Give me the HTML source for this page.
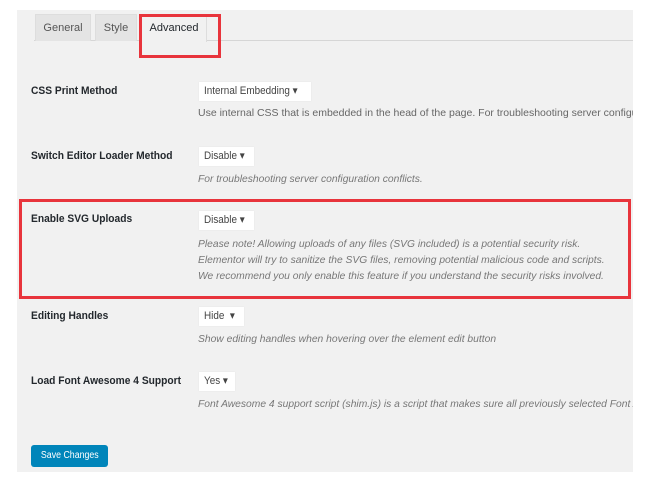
<!DOCTYPE html>
<html><head><meta charset="utf-8"><style>
body{margin:0;width:657px;height:482px;background:#fff;position:relative;overflow:hidden;font-family:"Liberation Sans",sans-serif;}
.bg{position:absolute;left:17px;top:10px;width:616px;height:462px;background:#f1f1f1;overflow:hidden;}
.a{position:absolute;white-space:nowrap;transform-origin:left top;}
.tab{position:absolute;top:14px;height:26px;background:#e4e4e4;border:1px solid #ddd;border-bottom:none;font-size:11px;color:#555;text-align:center;line-height:26px;}
.line{position:absolute;left:34px;top:40px;width:599px;height:1px;background:#d6d6d6;}
.lbl{font-size:11px;font-weight:bold;color:#23282d;transform:scaleX(0.93);}
.sel{position:absolute;background:#fff;height:19px;font-size:11px;color:#444;line-height:19px;padding-left:5px;box-shadow:0 0 1px #ddd;}
.sel span{display:inline-block;transform:scaleX(0.9);transform-origin:left;white-space:nowrap;}
.d{font-size:10.5px;color:#777;font-style:italic;transform:scaleX(0.98);}
.dn{font-size:10.5px;color:#666;transform:scaleX(1.0);}
.red{position:absolute;border:3px solid #e8343c;}
</style></head><body>
<div class="bg"></div>
<div class="line"></div>
<div class="tab" style="left:35px;width:54px">General</div>
<div class="tab" style="left:95px;width:40px">Style</div>
<div class="tab" style="left:141px;width:64px;background:#f1f1f1;height:27px;color:#23282d">Advanced</div>
<div class="red" style="left:139px;top:14px;width:76px;height:38px"></div>

<div style="position:absolute;left:0;top:0;width:633px;height:482px;overflow:hidden">
<div class="a lbl" style="left:31px;top:85px">CSS Print Method</div>
<div class="sel" style="left:199px;top:82px;width:107px"><span>Internal Embedding ▾</span></div>
<div class="a dn" style="left:198px;top:107px">Use internal CSS that is embedded in the head of the page. For troubleshooting server configuration conflicts.</div>

<div class="a lbl" style="left:31px;top:150px">Switch Editor Loader Method</div>
<div class="sel" style="left:199px;top:147px;width:50px"><span>Disable ▾</span></div>
<div class="a d" style="left:198px;top:173px">For troubleshooting server configuration conflicts.</div>

<div class="a lbl" style="left:31px;top:213px">Enable SVG Uploads</div>
<div class="sel" style="left:199px;top:211px;width:50px"><span>Disable ▾</span></div>
<div class="a d" style="left:198px;top:238px">Please note! Allowing uploads of any files (SVG included) is a potential security risk.</div>
<div class="a d" style="left:198px;top:254px">Elementor will try to sanitize the SVG files, removing potential malicious code and scripts.</div>
<div class="a d" style="left:198px;top:270px">We recommend you only enable this feature if you understand the security risks involved.</div>

<div class="a lbl" style="left:31px;top:310px">Editing Handles</div>
<div class="sel" style="left:199px;top:307px;width:40px"><span>Hide &nbsp;▾</span></div>
<div class="a d" style="left:198px;top:333px">Show editing handles when hovering over the element edit button</div>

<div class="a lbl" style="left:31px;top:375px">Load Font Awesome 4 Support</div>
<div class="sel" style="left:199px;top:372px;width:31px"><span>Yes ▾</span></div>
<div class="a d" style="left:198px;top:398px">Font Awesome 4 support script (shim.js) is a script that makes sure all previously selected Font Awesome icons</div>
</div>
<div class="red" style="left:19px;top:199px;width:606px;height:94px"></div>

<div style="position:absolute;left:31px;top:445px;width:77px;height:22px;background:#0085ba;border-radius:3px;color:#fff;font-size:10px;line-height:22px;text-align:center"><span style="display:inline-block;transform:scaleX(0.88)">Save Changes</span></div>
</body></html>
